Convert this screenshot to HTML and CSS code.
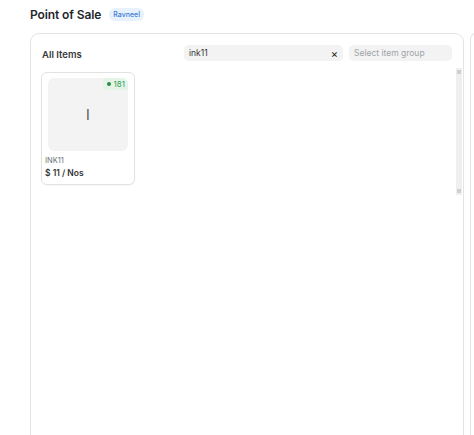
FILE: index.html
```html
<!DOCTYPE html>
<html lang="en">
<head>
  <meta charset="UTF-8" />
  <title>Point of Sale</title>
  <link rel="stylesheet" href="styles.css">
</head>
<body>
  <header class="page-head">
    <h1>Point of Sale</h1>
    <span class="badge">Ravneel</span>
  </header>

  <div class="pos">
    <section class="items-panel">
      <div class="panel-head">
        <h2>All Items</h2>
        <div class="filters">
          <div class="search">
            <span>ink11</span>
            <span class="clear">×</span>
          </div>
          <div class="group">Select item group</div>
        </div>
      </div>

      <div class="items-body">
        <div class="grid">
          <div class="item-card">
            <div class="thumb">
              <span class="stock"><i></i>181</span>
              <span class="abbr">I</span>
            </div>
            <div class="item-name">INK11</div>
            <div class="item-price">$ 11 / Nos</div>
          </div>
        </div>
        <div class="scrollbar">
          <span class="arrow up"></span>
          <span class="arrow down"></span>
        </div>
      </div>
    </section>

    <section class="cart-panel">
      <div class="cart-box"></div>
      <div class="cart-box tall"></div>
    </section>
  </div>
</body>
</html>
```

FILE: styles.css
```css
* {
  margin: 0;
  padding: 0;
  box-sizing: border-box;
  font-family: Inter, "Noto Sans", sans-serif;
}

body {
  background: #fff;
  color: #1f272e;
  overflow: hidden;
  height: 435px;
}

.page-head {
  display: flex;
  align-items: center;
  gap: 8px;
  padding: 2px 0 0 30px;
  height: 26px;
}

.page-head h1 {
  font-size: 12px;
  font-weight: 600;
  letter-spacing: -0.1px;
}

.badge {
  background: #e8f2fd;
  color: #3a7bd5;
  font-size: 7px;
  font-weight: 500;
  padding: 2px 4px;
  border-radius: 6px;
}

.pos {
  display: flex;
  gap: 6px;
  margin-top: 7px;
  padding-left: 30px;
}

.items-panel {
  width: 434px;
  height: 420px;
  border: 1px solid #e4e4e4;
  border-radius: 9px;
  flex-shrink: 0;
}

.panel-head {
  display: flex;
  align-items: center;
  justify-content: space-between;
  padding: 11px 11px 0 11px;
}

.panel-head h2 {
  font-size: 9.5px;
  font-weight: 600;
  color: #383838;
  margin-top: 3px;
}

.filters {
  display: flex;
  gap: 6px;
}

.search, .group {
  height: 16px;
  background: #f3f3f3;
  border-radius: 5px;
  font-size: 8.5px;
  display: flex;
  align-items: center;
  padding: 0 5px;
}

.search {
  width: 159px;
  justify-content: space-between;
  color: #333;
}

.clear {
  font-size: 11px;
  color: #222;
  margin-top: 2px;
}

.group {
  width: 103px;
  color: #a0a4a8;
}

.items-body {
  display: flex;
  justify-content: space-between;
  padding: 7px 0 0 10px;
}

.grid {
  padding-top: 4px;
}

.item-card {
  width: 94px;
  height: 113px;
  border: 1px solid #e2e2e2;
  border-radius: 6px;
  padding: 5px 6px;
  box-shadow: 0 1px 2px rgba(0, 0, 0, 0.04);
}

.thumb {
  position: relative;
  height: 73px;
  background: #f3f3f3;
  border-radius: 6px;
  display: flex;
  align-items: center;
  justify-content: center;
}

.abbr {
  font-size: 14px;
  font-weight: 400;
  color: #555;
}

.stock {
  position: absolute;
  top: 0;
  right: 0;
  background: #e4f5e8;
  color: #2f9e55;
  font-size: 8px;
  padding: 1px 3px 1px 4px;
  border-radius: 0 6px 0 4px;
  display: flex;
  align-items: center;
  gap: 3px;
}

.stock i {
  width: 4px;
  height: 4px;
  background: #2b8a4c;
  border-radius: 50%;
}

.item-name {
  font-size: 7.5px;
  color: #6b6f73;
  margin: 5px 0 0 -3px;
}

.item-price {
  font-size: 8.5px;
  font-weight: 600;
  color: #333;
  margin: 3px 0 0 -3px;
}

.scrollbar {
  position: relative;
  width: 6px;
  height: 127px;
  background: #efefef;
  margin-right: 1px;
}

.arrow {
  position: absolute;
  left: 1px;
  width: 4px;
  height: 4px;
  background: #cfcfcf;
}

.arrow.up { top: 2px; }
.arrow.down { bottom: 2px; }

.cart-panel {
  width: 40px;
  height: 420px;
  border: 1px solid #e4e4e4;
  border-radius: 9px 0 0 9px;
  border-right: none;
  padding: 10px 0 0 4px;
}

.cart-box {
  height: 30px;
  background: #f6f6f6;
  border-radius: 5px 0 0 5px;
}

.cart-box.tall {
  margin-top: 16px;
  height: 100px;
  background: #fafafa;
  border: 1px solid #eee;
  border-right: none;
}
```
